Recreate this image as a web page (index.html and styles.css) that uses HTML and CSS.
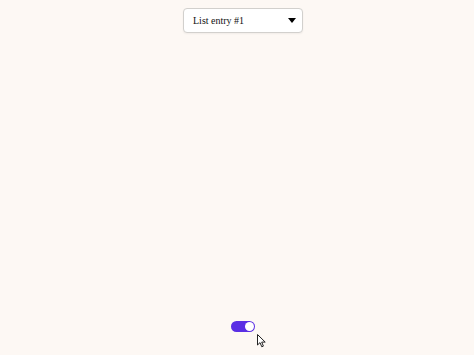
FILE: index.html
```html
<!DOCTYPE html>
<html lang="en">
<head>
  <meta charset="UTF-8">
  <title>List select</title>
  <link rel="stylesheet" href="styles.css">
</head>
<body>
  <div class="page">
    <div class="select">
      <span class="select-label">List entry #1</span>
      <span class="caret"></span>
    </div>
    <div class="switch-row">
      <div class="switch">
        <span class="knob"></span>
      </div>
      <!-- mouse pointer hovering the switch -->
      <svg class="pointer" width="10" height="14" viewBox="0 0 10 14">
        <path d="M0.5 0.5 L0.5 11 L3 8.6 L4.8 12.8 L6.4 12.1 L4.7 8.1 L8.2 8.1 Z" fill="#fff" stroke="#222" stroke-width="1" stroke-linejoin="round"/>
      </svg>
    </div>
  </div>
</body>
</html>
```

FILE: styles.css
```css
html, body {
  margin: 0;
  padding: 0;
  height: 100%;
}

body {
  background-color: #fdf8f4;
  font-family: "Liberation Serif", "Times New Roman", serif;
}

.page {
  box-sizing: border-box;
  height: 100vh;
  display: flex;
  flex-direction: column;
  align-items: center;
  justify-content: space-between;
  padding: 8px 0 23px 12px;
}

.select {
  box-sizing: border-box;
  width: 120px;
  height: 25px;
  display: flex;
  align-items: center;
  justify-content: space-between;
  padding: 0 6px 0 9px;
  background-color: #fff;
  border: 1px solid #d2d0cd;
  border-radius: 4px;
  box-shadow: 0 1px 2px rgba(0, 0, 0, 0.05);
  font-size: 10px;
  color: #111;
}

.caret {
  width: 0;
  height: 0;
  border-left: 4.5px solid transparent;
  border-right: 4.5px solid transparent;
  border-top: 5px solid #000;
}

.switch-row {
  position: relative;
}

.switch {
  width: 24px;
  height: 11px;
  border-radius: 6px;
  background-color: #5a2ee4;
  display: flex;
  align-items: center;
  justify-content: flex-end;
  padding: 0 1px;
  box-sizing: border-box;
}

.knob {
  width: 9px;
  height: 9px;
  border-radius: 50%;
  background-color: #fff;
}

.pointer {
  position: absolute;
  left: 26px;
  top: 13px;
}
```
